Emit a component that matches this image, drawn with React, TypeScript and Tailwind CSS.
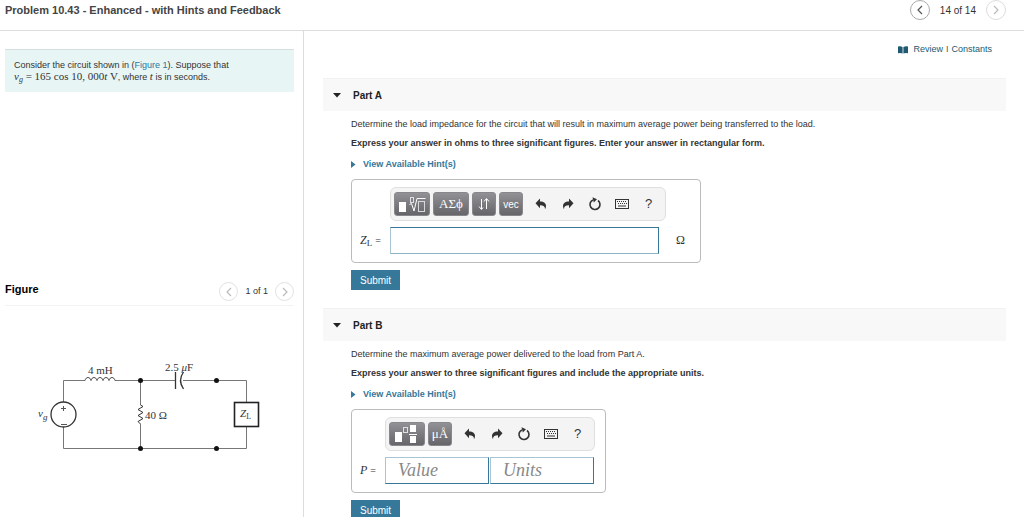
import React from 'react';

const ChevronIcon: React.FC<{ direction: 'left' | 'right' }> = ({ direction }) => (
    <svg width="8" height="10" viewBox="0 0 8 10" fill="none" stroke="currentColor" strokeWidth="1.2" aria-hidden="true">
        <path d={direction === 'left' ? 'M6 1 2 5l4 4' : 'M2 1l4 4-4 4'} />
    </svg>
);

const RoundButton: React.FC<{
    direction: 'left' | 'right';
    label: string;
    className: string;
}> = ({ direction, label, className }) => (
    <button
        type="button"
        aria-label={label}
        className={`flex items-center justify-center rounded-full border ${className}`}
    >
        <ChevronIcon direction={direction} />
    </button>
);

const PaletteButton: React.FC<{
    label: string;
    width: string;
    children: React.ReactNode;
}> = ({ label, width, children }) => (
    <button
        type="button"
        aria-label={label}
        className={`${width} flex h-6 items-center justify-center rounded-[3px] border border-[#88888c] bg-linear-to-b from-[#919196] to-[#66666a] text-white`}
    >
        {children}
    </button>
);

const RootTemplateIcon = () => (
    <svg width="30" height="18" viewBox="0 0 30 18" fill="none" className="shrink-0" aria-hidden="true">
        <rect x="2" y="7" width="7" height="10" fill="#fff" />
        <rect x="13.5" y="2.5" width="3" height="5" stroke="#e0e0e2" />
        <path d="M12.500 9.500l2-1 2.500 7.500 3-12.500h8.500" stroke="#fff" />
        <rect x="21.500" y="6.500" width="6" height="10" stroke="#d8d8da" />
    </svg>
);

const FractionTemplateIcon = () => (
    <svg width="30" height="20" viewBox="0 0 30 20" fill="none" className="shrink-0" aria-hidden="true">
        <rect x="3" y="8" width="7" height="10" fill="#fff" />
        <rect x="11.500" y="3.500" width="4" height="5" stroke="#e0e0e2" />
        <rect x="18" y="1" width="6" height="7" fill="#fff" />
        <path d="M17 10.500h8" stroke="#fff" />
        <rect x="18" y="12" width="6" height="7" fill="#fff" />
    </svg>
);

const ArrowsIcon = () => (
    <svg width="12" height="14" viewBox="0 0 12 14" fill="none" stroke="#fff" aria-hidden="true">
        <path d="M3.500 2v10M1 9.500l2.500 3 1.500-2M8.500 12V2M6 4.500l2.500-3 2.500 3" />
    </svg>
);

const UndoIcon: React.FC<{ className?: string }> = ({ className = '' }) => (
    <svg width="12" height="12" viewBox="0 0 12 12" fill="currentColor" className={className} aria-hidden="true">
        <path d="M5 .5v3c4 0 6 2 6 4.500 0 1.300-.4 2.300-1 3.200.2-2.700-1.500-4-5-4v3L.5 5.300z" />
    </svg>
);

const ResetIcon = () => (
    <svg width="14" height="14" viewBox="0 0 14 14" fill="none" stroke="currentColor" strokeWidth="1.600" aria-hidden="true">
        <path d="M10 3.500a5 5 0 1 1-5-.600" />
        <path d="M4.500.300 9 2.200 5.800 5.500z" fill="currentColor" stroke="none" />
    </svg>
);

const KeyboardIcon = () => (
    <svg width="14" height="10" viewBox="0 0 14 10" fill="none" stroke="currentColor" aria-hidden="true">
        <rect x=".5" y=".5" width="13" height="9" />
        <path d="M2 2.500h10M3 4.500h9" strokeDasharray="1 1" />
        <path d="M3 7h8" />
    </svg>
);

const ToolButton: React.FC<{ label: string; children: React.ReactNode }> = ({ label, children }) => (
    <button type="button" aria-label={label} className="flex h-6 w-[27px] items-center justify-center text-[#333]">
        {children}
    </button>
);

const Toolbar: React.FC<{ children: React.ReactNode }> = ({ children }) => (
    <div className="flex h-[34px] items-center rounded-md border border-[#dfdfdf] bg-[#f4f4f4] px-[3px]">
        <div className="mr-1 flex gap-[3px]">{children}</div>
        <ToolButton label="Undo"><UndoIcon /></ToolButton>
        <ToolButton label="Redo"><UndoIcon className="-scale-x-100" /></ToolButton>
        <ToolButton label="Reset"><ResetIcon /></ToolButton>
        <ToolButton label="Keyboard shortcuts"><KeyboardIcon /></ToolButton>
        <ToolButton label="Help"><span className="text-[13px]">?</span></ToolButton>
    </div>
);

const Part: React.FC<{
    title: string;
    question: string;
    instruction: string;
    children: React.ReactNode;
}> = ({ title, question, instruction, children }) => (
    <section className="mb-[18px]">
        <h2 className="border-t border-[#f2f2f2] bg-[#f8f8f8]">
            <button type="button" className="flex h-8 w-full items-center gap-3 pl-[10px] text-[10px] font-bold text-[#222]">
                <svg width="8" height="5" viewBox="0 0 8 5" aria-hidden="true">
                    <path d="M0 0h8L4 4.500z" fill="currentColor" />
                </svg>
                {title}
            </button>
        </h2>
        <div className="flex flex-col items-start pl-7 pt-1.5 text-[9px] text-[#333]">
            <p className="leading-[14px]">{question}</p>
            <p className="mt-1 font-bold leading-[16px]">{instruction}</p>
            <button type="button" className="mt-[6px] flex items-center gap-[7px] font-bold leading-[14px] text-[#35789a]">
                <svg width="5" height="7" viewBox="0 0 5 7" aria-hidden="true">
                    <path d="M0 0l4.500 3.500L0 7z" fill="currentColor" />
                </svg>
                View Available Hint(s)
            </button>
            <div className="mt-2 flex rounded border border-[#bbb] px-2 pb-2 pt-[7px]">{children}</div>
            <button type="button" className="mt-[7px] h-5 bg-[#35789a] px-[9px] text-[10px] text-white">
                Submit
            </button>
        </div>
    </section>
);

const CircuitDiagram = () => (
    <svg
        width="250"
        height="110"
        viewBox="30 350 250 110"
        fill="none"
        stroke="#777"
        className="ml-[30px] mt-11"
        role="img"
        aria-label="Circuit with source, inductor, resistor, capacitor and load"
    >
        <path d="M63.500 402v-21.500H85M115 380.500h60.500M183 380.500h63.500V402M63.500 427v21.500h183V427M140.500 380.500V405M140.500 424v24.500" />
        <path d="M85 380.500c1-4 5-4 6 0 1-4 5-4 6 0 1-4 5-4 6 0 1-4 5-4 6 0 1-4 5-4 6 0" stroke="#444" />
        <path d="M140.500 405l2.500 1.500-5 3 5 3-5 3 5 3-5 3 2.500 2.500" stroke="#333" />
        <path d="M175.500 372v17M183.500 372q-6 8.500 0 17" stroke="#333" strokeWidth="1.300" />
        <circle cx="63.500" cy="414.500" r="12.500" stroke="#333" strokeWidth="1.300" />
        <path d="M61 408.500h5M63.500 406v5M61 424.500h6" stroke="#555" />
        <rect x="234.500" y="402.500" width="24" height="24" stroke="#222" strokeWidth="1.600" />
        <g fill="#111" stroke="none">
            <circle cx="140.500" cy="380.500" r="2.500" />
            <circle cx="216.500" cy="380.500" r="2.500" />
            <circle cx="140.500" cy="448.500" r="2.500" />
            <circle cx="216.500" cy="448.500" r="2.500" />
        </g>
        <g fill="#333" stroke="none" className="font-['Liberation_Serif',serif] text-[11px]">
            <text x="88" y="374">4 mH</text>
            <text x="165" y="371">2.5 <tspan fontStyle="italic">μ</tspan>F</text>
            <text x="145" y="419">40 Ω</text>
            <text x="38" y="417" fontStyle="italic">v<tspan dy="3" fontSize="9">g</tspan></text>
            <text x="240" y="417"><tspan fontStyle="italic">Z</tspan><tspan dy="2" fontSize="8">L</tspan></text>
        </g>
    </svg>
);

const App: React.FC = () => (
    <div className="flex h-screen flex-col overflow-hidden bg-white font-['Liberation_Sans',Arial,sans-serif]">
        <header className="flex h-[31px] shrink-0 items-start justify-between border-b border-[#ddd] pl-[5px] pr-[18px]">
            <h1 className="pt-[2px] text-[11px] font-bold leading-4 text-[#444]">
                Problem 10.43 - Enhanced - with Hints and Feedback
            </h1>
            <nav className="flex items-center gap-[10px] text-[10px] text-[#333]" aria-label="Problems">
                <RoundButton direction="left" label="Previous problem" className="size-5 border-[#aaa] text-[#555]" />
                <span>14 of 14</span>
                <RoundButton direction="right" label="Next problem" className="size-5 border-[#ddd] text-[#bbb]" />
            </nav>
        </header>

        <main className="flex min-h-0 flex-1">
            <aside className="w-[304px] shrink-0 border-r border-[#d5dde5] pl-[5px] pr-[9px] pt-[18px]">
                <div className="h-[229px]">
                    <div className="border-t border-[#d5dfdf] bg-[#e8f5f5] px-[9px] pb-[9px] pt-[10px] text-[9px] leading-[11px] text-[#333]">
                        <p>
                            Consider the circuit shown in (<a href="#figure" className="text-[#2878a0]">Figure 1</a>). Suppose that
                        </p>
                        <p>
                            <span className="font-['Liberation_Serif',serif] text-[11px]">
                                <i>v</i><sub className="text-[8px] italic leading-none">g</sub> = 165 cos 10, 000<i>t</i> V
                            </span>
                            , where <i className="font-['Liberation_Serif',serif] text-[11px]">t</i> is in seconds.
                        </p>
                    </div>
                </div>
                <div id="figure" className="flex h-[28px] items-center justify-between border-b border-[#f3f3f3]">
                    <h2 className="pb-1 text-[11px] font-bold text-black">Figure</h2>
                    <nav className="flex items-center gap-[7px] text-[9px] text-[#333]" aria-label="Figures">
                        <RoundButton direction="left" label="Previous figure" className="size-[19px] border-[#e2e2e2] text-[#bbb]" />
                        <span>1 of 1</span>
                        <RoundButton direction="right" label="Next figure" className="size-[19px] border-[#e2e2e2] text-[#bbb]" />
                    </nav>
                </div>
                <div className="-ml-[5px]">
                    <CircuitDiagram />
                </div>
            </aside>

            <div className="min-w-0 flex-1 overflow-hidden pl-[19px] pr-[18px] pt-3">
                <div className="mb-[21px] flex h-[14px] items-center justify-end pr-[14px] text-[9px] text-[#205a72]">
                    <svg width="10" height="8" viewBox="0 0 10 8" fill="currentColor" className="mr-[5px]" aria-hidden="true">
                        <path d="M0 .5Q2.500 0 4.600 1v6.500Q2.500 6.500 0 7.300zM10 .5Q7.500 0 5.400 1v6.500Q7.500 6.500 10 7.300z" />
                    </svg>
                    <a href="#review">Review</a>
                    <span className="px-[3px] text-[#555]">I</span>
                    <a href="#constants">Constants</a>
                </div>

                <Part
                    title="Part A"
                    question="Determine the load impedance for the circuit that will result in maximum average power being transferred to the load."
                    instruction="Express your answer in ohms to three significant figures. Enter your answer in rectangular form."
                >
                    <label htmlFor="impedance" className="mt-[44px] w-[30px] font-['Liberation_Serif',serif] text-[12px]">
                        <i>Z</i><sub className="text-[9px] leading-none">L</sub> <span className="text-[10px]">=</span>
                    </label>
                    <div>
                        <Toolbar>
                            <PaletteButton label="Templates" width="w-9"><RootTemplateIcon /></PaletteButton>
                            <PaletteButton label="Greek symbols" width="w-9">
                                <span className="font-['Liberation_Serif',serif] text-[13px]">ΑΣϕ</span>
                            </PaletteButton>
                            <PaletteButton label="Arrows" width="w-6"><ArrowsIcon /></PaletteButton>
                            <PaletteButton label="Vectors" width="w-6"><span className="text-[10px]">vec</span></PaletteButton>
                        </Toolbar>
                        <input
                            id="impedance"
                            type="text"
                            className="mt-[6px] block h-[27px] w-[269px] border border-[#35789a] border-b-[#8fb4c8] border-l-[#a9c5d3] bg-white px-2 text-[14px] outline-none"
                        />
                    </div>
                    <span className="mt-[44px] w-[26px] pl-[10px] font-['Liberation_Serif',serif] text-[12px]">Ω</span>
                </Part>

                <Part
                    title="Part B"
                    question="Determine the maximum average power delivered to the load from Part A."
                    instruction="Express your answer to three significant figures and include the appropriate units."
                >
                    <label htmlFor="power-value" className="mt-[44px] w-[25px] font-['Liberation_Serif',serif] text-[12px]">
                        <i>P</i> <span className="text-[10px]">=</span>
                    </label>
                    <div className="pr-0.5">
                        <Toolbar>
                            <PaletteButton label="Templates" width="w-9"><FractionTemplateIcon /></PaletteButton>
                            <PaletteButton label="Units" width="w-6">
                                <span className="font-['Liberation_Serif',serif] text-[13px]">μÅ</span>
                            </PaletteButton>
                        </Toolbar>
                        <div className="mt-[6px] flex gap-px font-['Liberation_Serif',serif] text-[18px] italic">
                            <input
                                id="power-value"
                                type="text"
                                placeholder="Value"
                                className="h-[27px] w-[104px] border border-[#35789a] border-l-[#a9c5d3] border-t-[#a9c5d3] bg-white px-3 outline-none placeholder:text-[#888]"
                            />
                            <input
                                type="text"
                                placeholder="Units"
                                aria-label="Units"
                                className="h-[27px] w-[104px] border border-[#35789a] border-l-[#a9c5d3] border-t-[#a9c5d3] bg-white px-3 outline-none placeholder:text-[#888]"
                            />
                        </div>
                    </div>
                </Part>
            </div>
        </main>
    </div>
);

export default App;
